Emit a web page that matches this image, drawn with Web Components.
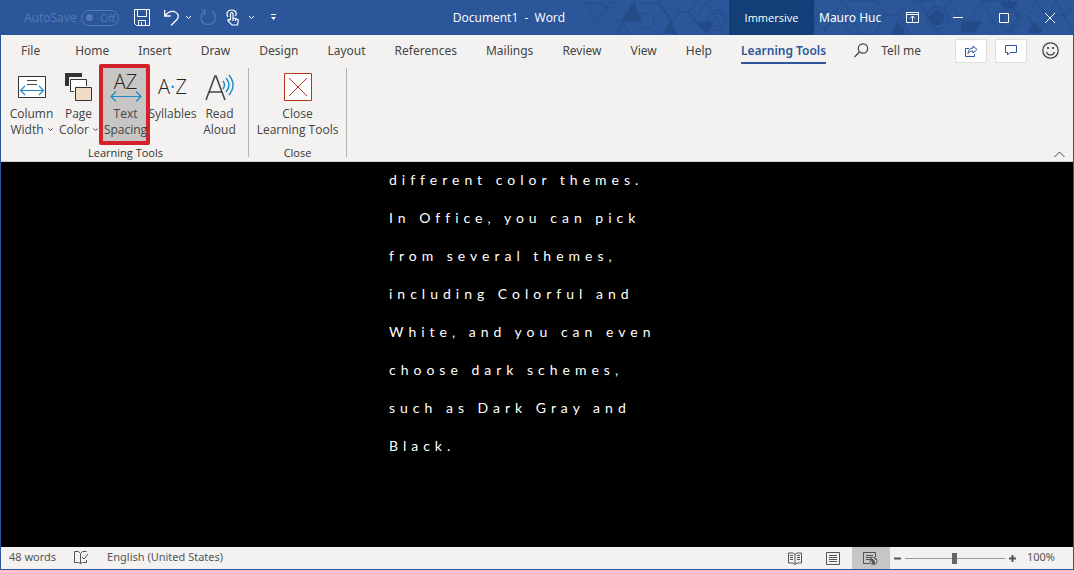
<!DOCTYPE html>
<html lang="en">
<head>
<meta charset="utf-8">
<title>Document1 - Word</title>
<style>
html, body { margin: 0; height: 100%; }
body { font: 12px/16px "Noto Sans", "Open Sans", sans-serif; color: #444; background: #000; }
</style>
</head>
<body>
<word-window></word-window>
<script>
const reset = `*,::before{box-sizing:border-box}button{font:inherit;color:inherit;background:none;border:0;padding:0;margin:0}svg{display:block;fill:none;flex:none}svg:not([stroke]){stroke:currentColor}`;
function define(name, css, html, init) {
  const t = document.createElement('template');
  t.innerHTML = `<style>${reset}${css}</style>${html}`;
  customElements.define(name, class extends HTMLElement {
    constructor() {
      super();
      this.attachShadow({ mode: 'open' }).append(t.content.cloneNode(true));
      if (init) init.call(this, this.shadowRoot);
    }
  });
}

define('title-pattern', `:host{display:block;position:absolute;right:0;top:0;color:#224b88;pointer-events:none}`, `
<svg width="489" height="35" viewBox="585 0 489 35" aria-hidden="true">
 <path d="M586 3l12 19 12-19M586 3h14M602 3c3 7 13 7 16 0h-8M617 35l7-12 8 12M618 21h14M640 3h21M660 3l13 20M679 35l-12-6M660 2l14 21-6 11M674 22l6-10h10l8-11M680 12l-6-10M690 12l7 10M694 22l14-20 18 32"/>
 <circle cx="647" cy="21" r="8"/><circle cx="718" cy="20" r="10"/><circle cx="718" cy="20" r="7"/>
 <path d="M635 2l7 19h-19zM671 22l7 11h-14zM697 22h17l-6 12z" fill="#224b88"/>
 <path d="M814 3l8 12-8 14M824 34l19-33 19 33M850 1h28l8 14-11 19h-24l-8-14M886 15h12l18-14M900 34l20-33 19 33M899 15l12 19M920 1l10 16h12l9-16M963 34l19-33 19 33M951 1l14 24h15M982 1h28l9 15-10 18M1019 16h10l9-15M1029 16l10 18M1039 34l18-33 17 30M1038 1l8 14h22l6-10M914 1h20l8 14"/>
 <circle cx="938" cy="18" r="11"/><circle cx="1011" cy="20" r="11"/><circle cx="1011" cy="20" r="8"/><circle cx="824" cy="20" r="8"/>
 <circle cx="938" cy="18" r="7" fill="#224b88"/><path d="M964 22h19l-7 10h-14zM899 22l-7 12h14zM1001 2h18l-5 6h-8zM1036 22l7 10h-14z" fill="#224b88"/>
</svg>`);

define('title-bar', `
:host{display:flex;position:relative;height:35px;background:#2b579a;color:#fff;align-items:stretch;flex:none}
.quick{display:flex;align-items:center;width:288px;padding-left:23px}
.auto{display:flex;align-items:center;gap:5px;width:110px;color:#5379b2;font-family:"Open Sans",sans-serif}
.toggle{width:38px;height:16px;border:1px solid #5379b2;border-radius:8px;font-size:10px;line-height:14px;display:flex;align-items:center;gap:7px;padding-left:4px}
.toggle::before{content:"";width:7px;height:7px;border-radius:50%;background:#5379b2}
.quick>button{display:flex;justify-content:center}
.icon{width:16px}.chev{width:20px}.redo{color:#5379b2}
h1{flex:1;font:inherit;font-family:"Open Sans",sans-serif;margin:0;text-align:center;line-height:35px;white-space:pre}
.right{position:relative;display:flex}
.immersive{width:85px;background:#123f78;line-height:35px;text-align:center;font-size:11px;font-family:"Open Sans",sans-serif}
.user{width:75px;padding-left:5px;text-align:left;white-space:nowrap}
.sys{width:46px;display:flex;align-items:center;justify-content:center}
`, `
<title-pattern></title-pattern>
<div class="quick">
 <div class="auto"><span id="as">AutoSave</span><button class="toggle" role="switch" aria-checked="false" aria-labelledby="as">Off</button></div>
 <button class="icon" aria-label="Save"><svg width="16" height="17" viewBox="0 0 16 17"><path d="M.5.5h15v16h-13l-2-2zM3.500.5v7h9v-7M4.500 16.500v-5h7v5M7.500 13v3"/></svg></button>
 <button style="width:14px;margin-left:14px" aria-label="Undo"><svg width="15" height="17" viewBox="0 0 15 17" stroke-width="1.300"><path d="M.7 1v6h6M.8 7C4 3 7 1.700 10 2.500c5 1.500 5.500 6 2 9L7 16.500"/></svg></button>
 <button class="chev" aria-label="Undo options"><svg width="7" height="5" viewBox="0 0 7 5"><path d="M1 1l2.500 2.500L6 1"/></svg></button>
 <button class="icon redo" style="margin-left:2px" aria-label="Redo"><svg width="16" height="17" viewBox="0 0 16 17" stroke-width="1.200"><path d="M1 1h4v5M5 2C-1 6 0 15 8 15.500c8-.5 9.500-9 4-13"/></svg></button>
 <button class="icon" style="margin-left:9px" aria-label="Touch or mouse mode"><svg width="14" height="17" viewBox="0 0 14 17" stroke-width="1.200"><path d="M2 8C0 5 1 1 5.500 1S11 4 9.500 7M4.500 11V5c0-2 2.500-2 2.500 0v4l4 1c1 .4 1.500 1 1.200 2l-.7 4H6l-4-4c-.5-1.500 1-2 2.500-.7M7 9v3M9.500 10v2"/></svg></button>
 <button class="chev" aria-label="Mode options"><svg width="7" height="5" viewBox="0 0 7 5"><path d="M1 1l2.500 2.500L6 1"/></svg></button>
 <button class="chev" aria-label="Customize toolbar" style="margin-left:2px"><svg width="7" height="7" viewBox="0 0 7 7"><path d="M1 .5h5"/><path d="M1 3h5L3.500 6z" fill="currentColor" stroke="none"/></svg></button>
</div>
<h1>Document1  -  Word</h1>
<div class="right">
 <button class="immersive">Immersive</button><button class="user">Mauro Huc</button>
 <button class="sys" aria-label="Ribbon display options"><svg width="13" height="11" viewBox="0 0 13 11"><path d="M.5.5h12v10H.5zM.5 2.500h12M6.500 9.500V4M4 6.500L6.500 4 9 6.500"/></svg></button>
 <button class="sys" aria-label="Minimize"><svg width="10" height="11" viewBox="0 0 10 11"><path d="M0 5.500h10"/></svg></button>
 <button class="sys" aria-label="Maximize"><svg width="10" height="10" viewBox="0 0 10 10"><path d="M.5.5h9v9h-9z"/></svg></button>
 <button class="sys" aria-label="Close"><svg width="10" height="10" viewBox="0 0 10 10"><path d="M0 0l10 10M10 0L0 10"/></svg></button>
</div>`);

define('ribbon-tabs', `
:host{display:flex;height:31px;align-items:center;padding:0 14px 0 6px;flex:none;white-space:nowrap}
nav{display:flex;gap:1px}
a{color:#444;text-decoration:none;padding:0 14px;line-height:22px}
a:first-child{margin-right:6px}
a[aria-current] span{display:block;box-shadow:0 2px 0 #2b579a}
a[aria-current]{color:#2b579a;font-weight:600}
.tell{display:flex;align-items:center;gap:12px;margin-left:14px}
.actions{display:flex;gap:8px;margin-left:auto;align-items:center}
.box{width:32px;height:24px;background:#fff;border:1px solid #e1dfdd;border-radius:2px;color:#2b579a;display:flex;align-items:center;justify-content:center}
.smile{margin-left:7px}
`, `
<nav aria-label="Ribbon tabs"></nav>
<button class="tell"><svg width="15" height="15" viewBox="0 0 15 15" stroke-width="1.200"><circle cx="9" cy="5.500" r="4.700"/><path d="M5.500 9L.5 14"/></svg>Tell me</button>
<div class="actions">
 <button class="box" aria-label="Share"><svg width="13" height="12" viewBox="0 0 13 12"><path d="M4 3.500H.5v8h9V9M8 1l4 3.500L8 8V6C5.500 6 4 7 3 8.500 3.300 5 5 3 8 3z"/></svg></button>
 <button class="box" aria-label="Comments"><svg width="12" height="11" viewBox="0 0 12 11"><path d="M.5.5h11v7H5L2.500 10V7.500h-2z"/></svg></button>
 <button class="smile" aria-label="Feedback"><svg width="17" height="17" viewBox="0 0 17 17"><circle cx="8.500" cy="8.500" r="7.700" stroke-width="1.300"/><path d="M4.500 10c1.500 4 6.500 4 8 0" stroke-width="1.200"/><path d="M6 5v2M11 5v2" stroke-width="1.800"/></svg></button>
</div>`, function (root) {
  const nav = root.querySelector('nav');
  for (const n of ['File','Home','Insert','Draw','Design','Layout','References','Mailings','Review','View','Help','Learning Tools']) {
    const a = document.createElement('a'), s = document.createElement('span');
    a.href = '#'; s.textContent = n; a.append(s);
    if (n === 'Learning Tools') a.setAttribute('aria-current', 'page');
    nav.append(a);
  }
});

define('ribbon-button', `
:host{display:block;position:relative;width:47px}
:host([wide]){width:97px}
button{position:relative;z-index:1;width:100%;display:flex;flex-direction:column;align-items:center;white-space:nowrap}
.pic{height:40px;display:flex;align-items:center}
.lbl{display:flex;flex-direction:column;align-items:center;margin-top:-1px}
:host([active])::before{content:"";position:absolute;left:-3px;top:-3px;width:51px;height:81px;background:#c8c6c4;border:4px solid #d5222a;border-radius:2px}
`, `<button><span class="pic"><slot name="icon"></slot></span><span class="lbl"><slot></slot></span></button>`);

define('ribbon-group', `
:host{display:flex;flex-direction:column;padding:0 5px 0 7px;border-right:1px solid #b5b3b1;height:89px;margin-top:2px}
:host([plain]){padding:0}
.row{display:flex;flex:1;margin-top:-1px}
.name{text-align:center;font-size:11px;line-height:8px;color:#333}
`, `<div class="row"><slot></slot></div><div class="name"><slot name="name"></slot></div>`);

define('ribbon-panel', `
:host{display:flex;position:relative;height:95px;flex:none;font-family:"Open Sans",sans-serif}
.row{display:flex;align-items:center;gap:4px}
.collapse{position:absolute;right:8px;bottom:3px}
`, `
<ribbon-group>
 <ribbon-button><svg slot="icon" width="28" height="22" viewBox="0 0 28 22"><path d="M.5.5h27v21H.5z" stroke="#333" fill="#fff"/><path d="M9 4.500h10M9 8.500h10"/><path d="M3 14.500h22M7 10l-4.500 4.500L7 19M21 10l4.500 4.500L21 19" stroke="#1e88c9" stroke-width="1.200"/></svg><span>Column</span><span class="row">Width <svg width="5" height="4" viewBox="0 0 5 4"><path d="M.5.5l2 2 2-2"/></svg></span></ribbon-button>
 <ribbon-button><svg slot="icon" width="28" height="28" viewBox="0 0 28 28"><path d="M0 0h17v4H4v9H0z" fill="#333" stroke="none"/><path d="M5.500 6.500h16v12h-16z" fill="#fff" stroke="#333"/><path d="M9.500 13.500h18v14h-18z" fill="#f3f2f1" stroke="#f3f2f1"/><path d="M10.500 14.500h16v13h-16z" fill="#f0dcc6" stroke="#333"/></svg><span>Page</span><span class="row">Color <svg width="5" height="4" viewBox="0 0 5 4"><path d="M.5.5l2 2 2-2"/></svg></span></ribbon-button>
 <ribbon-button active><spacing-icon slot="icon"></spacing-icon><span>Text</span><span>Spacing</span></ribbon-button>
 <ribbon-button><syllable-icon slot="icon"></syllable-icon><span>Syllables</span></ribbon-button>
 <ribbon-button><svg slot="icon" width="29" height="28" viewBox="0 0 29 28"><path d="M1 27L10 3h1l9 24M4 19h13" stroke-width="1.600"/><path d="M18 8q3 4 0 8M21 5q6 7 0 14M24 2q8 10 0 20" stroke="#1e88c9" stroke-width="1.400"/></svg><span>Read</span><span>Aloud</span></ribbon-button>
 <span slot="name">Learning Tools</span>
</ribbon-group>
<ribbon-group plain>
 <ribbon-button wide><svg slot="icon" width="28" height="28" viewBox="0 0 28 28" stroke="#b5351a"><path d="M.5.5h27v27H.5z" fill="#fff"/><path d="M5 5l18 18M23 5L5 23"/></svg><span>Close</span><span>Learning Tools</span></ribbon-button>
 <span slot="name">Close</span>
</ribbon-group>
<button class="collapse" aria-label="Collapse ribbon"><svg width="11" height="7" viewBox="0 0 11 7"><path d="M.5 6l5-5 5 5"/></svg></button>`);

define('spacing-icon', `:host{display:block;font:300 20px/18px "Open Sans",sans-serif;color:#222}span{display:block;text-align:center}`,
`<span>AZ</span><svg width="32" height="11" viewBox="0 0 32 11" stroke="#1e88c9" stroke-width="1.200"><path d="M1 5.500h30M6 .5l-5 5 5 5M26 .5l5 5-5 5"/></svg>`);
define('syllable-icon', `:host{display:block;font:300 20px/20px "Open Sans",sans-serif;color:#222}b{color:#1e88c9}`, `A<b>·</b>Z`);

define('document-page', `
:host{display:block;flex:1;min-height:0;overflow:hidden;background:#000;color:#fff;font:14px/38px Lato,sans-serif}
p{width:296px;margin:-1px auto 0;letter-spacing:5px;white-space:nowrap}
`, `<p>different color themes.<br>In Office, you can pick<br>from several themes,<br>including Colorful and<br>White, and you can even<br>choose dark schemes,<br>such as Dark Gray and<br>Black.</p>`);

define('status-bar', `
:host{display:flex;height:22px;align-items:stretch;background:#f3f2f1;font-size:11px;line-height:20px;color:#555;padding:0 18px 0 8px;flex:none;white-space:nowrap}
.left,.right{display:flex;align-items:center}.left{gap:18px;padding-bottom:2px}.right{margin-left:auto}
.view{width:38px;height:22px;display:flex;align-items:center;justify-content:center}
.view[aria-pressed=true]{background:#c8c6c4}
.step{width:15px;display:flex;justify-content:center}
input{appearance:none;width:100px;height:12px;margin:0;background:linear-gradient(#999,#999) center/100% 1px no-repeat}
input::-webkit-slider-thumb{appearance:none;width:5px;height:11px;background:#666}
.pct{margin-left:7px;padding-bottom:2px}
`, `
<div class="left"><button>48 words</button>
<button aria-label="Proofing"><svg width="15" height="13" viewBox="0 0 15 13"><path d="M6.500 2.500L4.500.5h-4v11h4l2 1 2-1h4V9M6.500 2.500v10M6.500 2.500l2-2h4M8 6l2 2 4-5"/></svg></button>
<button>English (United States)</button></div>
<div class="right">
<button class="view" aria-label="Read mode"><svg width="14" height="13" viewBox="0 0 14 13"><path d="M7 2.500L5 1H.5v10H5l2 1.500L9 11h4.500V1H9zv10M2 3.500h3M2 5.500h3M2 7.500h3M9 3.500h3M9 5.500h3M9 7.500h3"/></svg></button>
<button class="view" aria-label="Print layout"><svg width="14" height="13" viewBox="0 0 14 13"><path d="M.5.5h13v12H.5zM3 3.500h8M3 5.500h8M3 7.500h8M3 9.500h8"/></svg></button>
<button class="view" aria-pressed="true" aria-label="Web layout"><svg width="15" height="13" viewBox="0 0 15 13"><path d="M12.500 5V.5H.5v11h6M3 3.500h7M3 5.500h6M3 7.500h4"/><circle cx="10.500" cy="9" r="3.500" fill="#eee"/><path d="M8 7l3 1 1 3-2 1zM11 6l2 2" fill="#555"/></svg></button>
<button class="step" aria-label="Zoom out"><svg width="7" height="7" viewBox="0 0 7 7" stroke-width="2"><path d="M0 3.500h7"/></svg></button>
<input type="range" min="0" max="200" value="100" aria-label="Zoom">
<button class="step" aria-label="Zoom in"><svg width="7" height="7" viewBox="0 0 7 7" stroke-width="2"><path d="M0 3.500h7M3.500 0v7"/></svg></button>
<button class="pct">100%</button></div>`);

define('word-window', `
:host{display:flex;flex-direction:column;height:100vh;border:solid #2b579a;border-width:0 1px 1px;box-sizing:border-box}
header{background:#f3f2f1;border-bottom:1px solid #d2d0ce;flex:none}
`, `<title-bar></title-bar><header><ribbon-tabs></ribbon-tabs><ribbon-panel></ribbon-panel></header><document-page></document-page><status-bar></status-bar>`);
</script>
</body>
</html>
